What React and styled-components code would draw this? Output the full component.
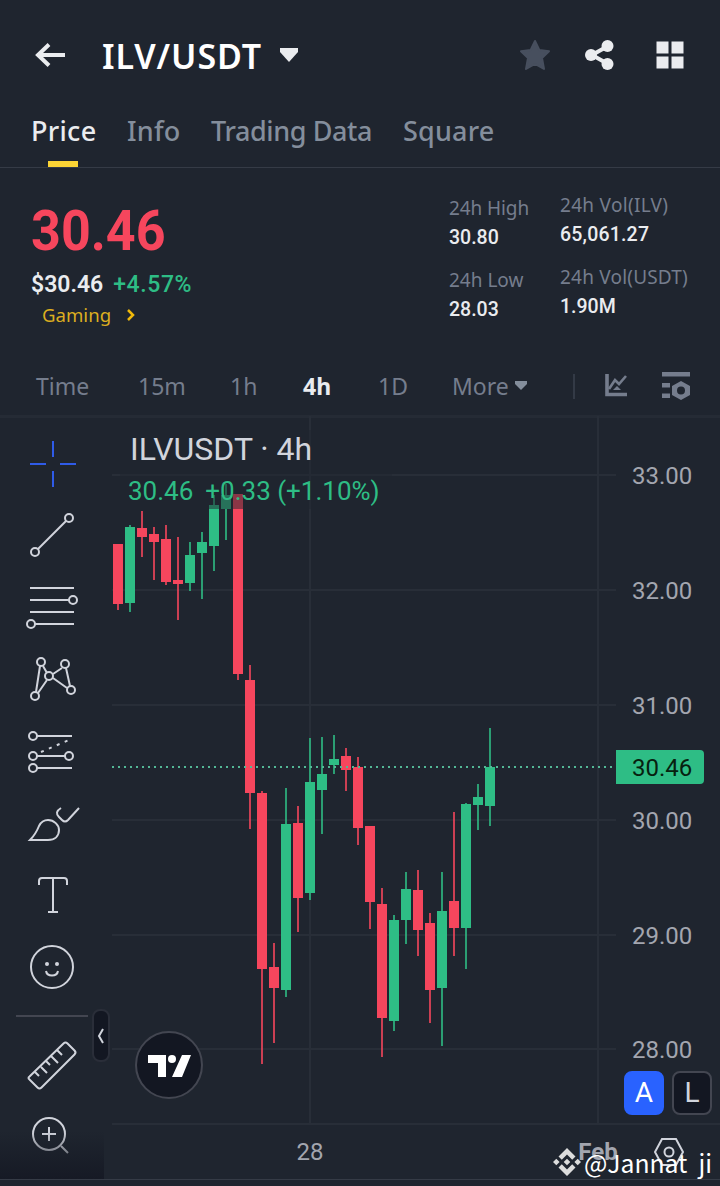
import React, { useState } from "react";
import styled, { createGlobalStyle } from "styled-components";

const GREEN = "#2ebd85";
const RED = "#f6465d";

const tabs = [
  { name: "Price", width: 96, spacing: 0.3 },
  { name: "Info", width: 84, spacing: 0.2 },
  { name: "Trading Data", width: 192, spacing: -0.4 },
  { name: "Square", width: 110, spacing: 0.2 },
];

const intervals = [
  { name: "Time", width: 102 },
  { name: "15m", width: 92 },
  { name: "1h", width: 73 },
  { name: "4h", width: 75 },
  { name: "1D", width: 74 },
];

const prices = ["33.00", "32.00", "31.00", "30.00", "29.00", "28.00"];

// [direction, wick top, body top, body bottom, wick bottom]
const candles = [
  ["down", 544, 544, 604, 610],
  ["up", 525, 527, 603, 612],
  ["down", 511, 528, 537, 557],
  ["down", 527, 534, 542, 580],
  ["down", 525, 539, 582, 585],
  ["down", 537, 580, 584, 620],
  ["up", 542, 555, 583, 591],
  ["up", 532, 542, 553, 599],
  ["up", 495, 505, 546, 571],
  ["up", 484, 495, 509, 540],
  ["down", 494, 494, 674, 680],
  ["down", 665, 680, 793, 829],
  ["down", 791, 793, 969, 1064],
  ["down", 943, 967, 988, 1043],
  ["up", 788, 824, 990, 997],
  ["down", 806, 823, 898, 932],
  ["up", 738, 782, 893, 900],
  ["up", 737, 774, 790, 834],
  ["up", 735, 759, 765, 774],
  ["down", 748, 756, 770, 791],
  ["down", 757, 767, 828, 845],
  ["down", 826, 826, 902, 929],
  ["down", 888, 904, 1018, 1057],
  ["up", 915, 920, 1021, 1031],
  ["up", 872, 889, 920, 944],
  ["down", 870, 890, 930, 956],
  ["down", 913, 923, 990, 1023],
  ["up", 872, 911, 988, 1046],
  ["down", 812, 901, 928, 956],
  ["up", 803, 804, 928, 969],
  ["up", 784, 797, 805, 830],
  ["up", 728, 767, 806, 826],
];

const tools = {
  cross: (
    <path stroke="#2f5be8" d="M53 13v16M53 43v16M30 36h16M60 36h16" />
  ),
  trend: (
    <>
      <path d="M38 49l28-28" />
      <circle cx="35" cy="52" r="4" />
      <circle cx="69" cy="18" r="4" />
    </>
  ),
  fib: (
    <>
      <path d="M30 16h44M30 28h39M30 40h44M35 52h39" />
      <circle cx="73" cy="28" r="4" />
      <circle cx="31" cy="52" r="4" />
    </>
  ),
  pattern: (
    <>
      <path d="M36 48l4-26M38 49l9-13M43 22l4 7M53 30l9-6M66 24l4 18M53 34l14 10" />
      <circle cx="41" cy="18" r="4" />
      <circle cx="65" cy="20" r="4" />
      <circle cx="49" cy="32" r="4" />
      <circle cx="35" cy="52" r="4" />
      <circle cx="71" cy="46" r="4" />
    </>
  ),
  forecast: (
    <>
      <path d="M37 20h35M37 40h28M37 52h35" />
      <path strokeDasharray="3 5.6" d="M41 36l28-12" />
      <circle cx="33" cy="20" r="4" />
      <circle cx="33" cy="40" r="4" />
      <circle cx="33" cy="52" r="4" />
      <circle cx="69" cy="40" r="4" />
    </>
  ),
  brush: (
    <>
      <path d="M30 52c4-4 7-9 9-14 2-4 5-6 9-6 6 0 11 5 11 10 0 6-4 10-11 10z" />
      <path d="M61 20c-5 3-5 6-2 9l3 3c2 2 4 2 6 0l11-12" />
    </>
  ),
  text: <path d="M39 25v-4q0-3 3-3h22q3 0 3 3v4M53 18v34M48 52h10" />,
  smile: (
    <>
      <circle cx="52" cy="35" r="21" />
      <circle cx="47" cy="32" r="2" fill="#d1d4dc" stroke="none" />
      <circle cx="57" cy="32" r="2" fill="#d1d4dc" stroke="none" />
      <path d="M46 39c1 6 11 6 12 0" />
    </>
  ),
};

const extraTools = {
  ruler: (
    <path d="M29.500 47.500l34-33q2-2 4 0l7 7q2 2 0 4l-33 33q-2 2-4 0l-8-8q-2-1.500 0-3zM35 43l4 4M41 38l6 6M46 32l4 4M51 27l7 7M57 21l5 5" />
  ),
  zoom: (
    <>
      <circle cx="49" cy="33" r="16" />
      <path d="M49 26v14M42 33h14M61 45l7 7" />
    </>
  ),
};

function CandleChart() {
  return (
    <svg width="504" height="708" viewBox="112 416 504 708">
      <g fill="#282e38">
        {prices.map((price, i) => (
          <rect key={price} x="112" y={Math.round(474 + i * 114.88)} width="504" height="2" />
        ))}
        <rect x="309" y="416" width="2" height="708" />
        <rect x="597" y="416" width="2" height="708" />
      </g>
      {candles.map(([dir, high, top, bottom, low], i) => (
        <g key={i} fill={dir === "up" ? GREEN : RED}>
          <rect x={117 + i * 12} y={high} width="2" height={low - high} opacity="0.8" />
          <rect x={113 + i * 12} y={top} width="10" height={bottom - top} />
        </g>
      ))}
      <path
        d="M112 767h504"
        stroke="#53b896"
        strokeWidth="2"
        strokeDasharray="2 4"
      />
    </svg>
  );
}

function App() {
  const [tab, setTab] = useState("Price");
  const [interval, setInterval] = useState("4h");

  return (
    <Page>
      <GlobalStyle />
      <Header>
        <svg width="32" height="28" viewBox="0 0 32 28" fill="none" stroke="#eaecef" strokeWidth="4">
          <path d="M3 14h28M15 3.500L4 14l11 10.500" />
        </svg>
        <Pair>ILV/USDT</Pair>
        <svg width="20" height="16" viewBox="0 0 20 16" fill="#eaecef">
          <path d="M1 1h18v4l-9 10L1 5z" />
        </svg>
        <Actions>
          <svg width="32" height="32" viewBox="0 0 32 32" fill="#474f5e" stroke="#474f5e" strokeWidth="2" strokeLinejoin="round">
            <path d="M16 2l4.300 9 9.700 1.300-7 6.700 2 11-9-5-9 5 2-11-7-6.700L11.700 11z" />
          </svg>
          <svg width="30" height="32" viewBox="0 0 30 32" fill="#eaecef">
            <path d="M23 7L7 16l16 9" fill="none" stroke="#eaecef" strokeWidth="4" />
            <circle cx="22.500" cy="7" r="6" />
            <circle cx="6" cy="16" r="6" />
            <circle cx="22.500" cy="25" r="6" />
          </svg>
          <svg width="28" height="28" viewBox="0 0 28 28" fill="#eaecef">
            <path d="M.5.500h12v12H.5zM15.500.500h12v12h-12zM.5 15.500h12v12H.5zM15.500 15.500h12v12h-12z" />
          </svg>
        </Actions>
      </Header>

      <Tabs>
        {tabs.map(({ name, width, spacing }) => (
          <Tab
            key={name}
            $width={width}
            $spacing={spacing}
            $active={tab === name}
            onClick={() => setTab(name)}
          >
            {name}
          </Tab>
        ))}
      </Tabs>

      <Ticker>
        <PriceBlock>
          <LastPrice>30.46</LastPrice>
          <Change>
            $30.46<span>+4.57%</span>
          </Change>
          <Category>
            Gaming
            <svg width="8" height="12" viewBox="0 0 8 12" fill="none" stroke="#f0b90b" strokeWidth="2.500">
              <path d="M1 1l5 5-5 5" />
            </svg>
          </Category>
        </PriceBlock>
        <Stats $width={111} $top={25}>
          <Label $spacing={-0.1}>24h High</Label>
          <Value>30.80</Value>
          <Label>24h Low</Label>
          <Value>28.03</Value>
        </Stats>
        <Stats $width={160} $top={22}>
          <Label $spacing={0.3}>24h Vol(ILV)</Label>
          <Value $spacing={0.2}>65,061.27</Value>
          <Label $spacing={0.2}>24h Vol(USDT)</Label>
          <Value>1.90M</Value>
        </Stats>
      </Ticker>

      <Intervals>
        {intervals.map(({ name, width }) => (
          <Interval
            key={name}
            $width={width}
            $active={interval === name}
            onClick={() => setInterval(name)}
          >
            {name}
          </Interval>
        ))}
        <More>
          More
          <svg width="14" height="12" viewBox="0 0 14 12" fill="#848e9c">
            <path d="M1 1h12v3l-6 6-6-6z" />
          </svg>
        </More>
        <Separator />
        <svg width="24" height="26" viewBox="0 0 24 26" fill="none" stroke="#757d8d">
          <path d="M3 1v20.500h20" strokeWidth="3.600" />
          <path d="M5 16l6-9 4 4 7-8" strokeWidth="2.600" />
          <path d="M9 17l4-4 4 4z" fill="#757d8d" stroke="none" />
        </svg>
        <SettingsIcon width="30" height="30" viewBox="0 0 30 30" fill="#757d8d">
          <path d="M1 1h28v4.500H1zM1 12h8v4.500H1zM1 22.500h8V27H1z" />
          <path
            fillRule="evenodd"
            d="M20 10l9 5v9l-9 5-9-5v-9zM20 15.500a4 4 0 100 8 4 4 0 000-8z"
          />
        </SettingsIcon>
      </Intervals>

      <Body>
        <Toolbar>
          {Object.keys(tools).map((name) => (
            <Tool key={name} viewBox="0 0 104 72">
              {tools[name]}
            </Tool>
          ))}
          <ToolDivider />
          {Object.keys(extraTools).map((name) => (
            <Tool key={name} viewBox="0 0 104 72">
              {extraTools[name]}
            </Tool>
          ))}
          <Fade />
          <Handle>
            <svg width="8" height="16" viewBox="0 0 8 16" fill="none" stroke="#d1d4dc" strokeWidth="2">
              <path d="M6 1L2 8l4 7" />
            </svg>
          </Handle>
        </Toolbar>

        <ChartArea>
          <PlotRow>
            <Plot>
              <CandleChart />
              <Legend>
                <Symbol>ILVUSDT · 4h</Symbol>
                <Quote>
                  30.46<span>+0.33 (+1.10%)</span>
                </Quote>
              </Legend>
              <Logo width="68" height="68" viewBox="135 1031 68 68">
                <circle cx="169" cy="1065" r="33" fill="#131722" stroke="#434651" strokeWidth="2" />
                <g fill="#fff">
                  <path d="M148 1055h18v22h-8v-14h-10zM182 1055h9l-9 22h-10z" />
                  <circle cx="172" cy="1059" r="4" />
                </g>
              </Logo>
            </Plot>
            <PriceAxis>
              {prices.map((price) => (
                <AxisLabel key={price}>{price}</AxisLabel>
              ))}
              <ScaleButtons>
                <ScaleButton $active>A</ScaleButton>
                <ScaleButton>L</ScaleButton>
              </ScaleButtons>
              <PriceTag>30.46</PriceTag>
            </PriceAxis>
          </PlotRow>
          <TimeAxis>
            <TimeLabel $width={396}>28</TimeLabel>
            <TimeLabel $width={180} $bold>
              Feb
            </TimeLabel>
            <GearIcon width="30" height="28" viewBox="0 0 30 28" fill="none" stroke="#d1d4dc" strokeWidth="2">
              <path d="M8 1h14l7 13-7 13H8L1 14z" />
              <circle cx="15" cy="14" r="4.500" />
            </GearIcon>
          </TimeAxis>
        </ChartArea>
      </Body>

      <Watermark>
        <svg width="28" height="28" viewBox="0 0 28 28" fill="#dcdcdc">
          <path d="M14 0l8.500 8.500-3.300 3.300L14 6.600l-5.200 5.200-3.300-3.300zM14 28l8.500-8.500-3.300-3.300-5.200 5.200-5.200-5.200-3.300 3.300zM14 10.700l3.300 3.300-3.300 3.300-3.300-3.300zM3.300 10.700L6.600 14l-3.300 3.300L0 14zM24.700 10.700L28 14l-3.300 3.300-3.300-3.300z" />
        </svg>
        @Jannat {" "}ji
      </Watermark>
    </Page>
  );
}

export default App;

const GlobalStyle = createGlobalStyle`
  * {
    box-sizing: border-box;
  }
  body {
    margin: 0;
    background: #1f252f;
  }
  svg {
    display: block;
    flex-shrink: 0;
  }
`;

const Page = styled.div`
  position: relative;
  display: flex;
  flex-direction: column;
  width: 720px;
  height: 1186px;
  overflow: hidden;
  background: #1f252f;
  color: #eaecef;
  font-family: "Noto Sans", sans-serif;
`;

const Header = styled.div`
  display: flex;
  align-items: center;
  height: 110px;
  padding: 0 36px 0 34px;
`;

const Pair = styled.div`
  width: 177px;
  margin-left: 36px;
  padding-top: 2px;
  color: #fff;
  font-size: 34px;
  font-weight: 650;
  letter-spacing: 0.9px;
  line-height: 40px;
  white-space: nowrap;
`;

const Actions = styled.div`
  display: flex;
  align-items: center;
  margin-left: auto;

  svg:nth-child(2) {
    margin: 0 41px 0 34px;
  }
`;

const Tabs = styled.div`
  display: flex;
  height: 58px;
  padding-left: 32px;
  border-bottom: 1px solid #353b46;
`;

const Tab = styled.div`
  width: ${(props) => props.$width}px;
  color: ${(props) => (props.$active ? "#eaecef" : "#848e9c")};
  font-size: 27px;
  font-weight: 500;
  letter-spacing: ${(props) => props.$spacing || 0}px;
  line-height: 42px;
  text-indent: -1px;
  white-space: nowrap;
  cursor: pointer;

  &::after {
    content: "";
    display: ${(props) => (props.$active ? "block" : "none")};
    width: 30px;
    height: 6px;
    margin: 9px 0 0 16px;
    background: #fcd535;
  }
`;

const Ticker = styled.div`
  display: flex;
  height: 187px;
  padding-left: 31px;
`;

const PriceBlock = styled.div`
  flex: 1;
  padding-top: 32px;
`;

const LastPrice = styled.div`
  color: ${RED};
  font-family: Roboto, sans-serif;
  font-size: 56px;
  font-weight: 700;
  line-height: 62px;
  transform: scaleX(0.93);
  transform-origin: left;
`;

const Change = styled.div`
  display: flex;
  font-family: Roboto, sans-serif;
  font-size: 23px;
  font-weight: 600;
  line-height: 30px;
  margin-top: 8px;

  span {
    margin-left: 10px;
    color: ${GREEN};
    font-weight: 500;
    letter-spacing: 0.6px;
  }
`;

const Category = styled.div`
  display: flex;
  align-items: center;
  gap: 16px;
  padding-left: 11px;
  color: #dcae20;
  font-size: 18.6px;
  line-height: 30px;
`;

const Stats = styled.div`
  width: ${(props) => props.$width}px;
  padding-top: ${(props) => props.$top}px;
`;

const Label = styled.div`
  color: #757d8d;
  font-size: 19px;
  letter-spacing: ${(props) => props.$spacing || 0}px;
  line-height: 30px;
  white-space: nowrap;
`;

const Value = styled.div`
  margin-bottom: 13px;
  font-family: Roboto, sans-serif;
  font-size: 19.5px;
  font-weight: 500;
  letter-spacing: ${(props) => props.$spacing || 0}px;
  line-height: 29px;
`;

const Intervals = styled.div`
  display: flex;
  align-items: center;
  height: 61px;
  padding: 1px 0 0 36px;
`;

const Interval = styled.div`
  width: ${(props) => props.$width}px;
  color: ${(props) => (props.$active ? "#eaecef" : "#757d8d")};
  font-size: 23px;
  font-weight: ${(props) => (props.$active ? 700 : 400)};
  cursor: pointer;
`;

const More = styled.div`
  display: flex;
  align-items: center;
  gap: 5px;
  width: 121px;
  color: #757d8d;
  font-size: 23px;
`;

const Separator = styled.div`
  width: 2px;
  height: 25px;
  margin-right: 29px;
  background: #333a46;
`;

const SettingsIcon = styled.svg`
  margin-left: 33px;
`;

const Body = styled.div`
  display: flex;
  height: 764px;
  border-bottom: 1px solid #353b46;
  box-shadow: 0 -1px #252b35, inset 0 2px #252b35;
`;

const Toolbar = styled.div`
  position: relative;
  display: flex;
  flex-direction: column;
  width: 112px;
  padding-top: 12px;
`;

const Tool = styled.svg`
  width: 104px;
  height: 72px;
  fill: none;
  stroke: #d1d4dc;
  stroke-width: 2;
`;

const ToolDivider = styled.div`
  width: 72px;
  height: 2px;
  margin: 11px 0 12px 16px;
  flex-shrink: 0;
  background: #434651;
`;

const Fade = styled.div`
  position: absolute;
  left: 0;
  bottom: 0;
  width: 104px;
  height: 48px;
  background: linear-gradient(rgba(19, 23, 34, 0), #161a25);
`;

const Handle = styled.div`
  position: absolute;
  left: 92px;
  top: 593px;
  display: flex;
  align-items: center;
  justify-content: center;
  width: 18px;
  height: 53px;
  border: 2px solid #2a2e39;
  border-radius: 8px;
  background: #131722;
`;

const ChartArea = styled.div`
  display: flex;
  flex-direction: column;
  width: 608px;
`;

const PlotRow = styled.div`
  display: flex;
  height: 707px;
`;

const Plot = styled.div`
  position: relative;
  width: 504px;
`;

const Legend = styled.div`
  position: absolute;
  left: 8px;
  top: 14px;
  width: 272px;
  height: 79px;
  font-family: Roboto, sans-serif;
  background: rgba(31, 37, 47, 0.5);
  white-space: nowrap;
`;

const Symbol = styled.div`
  padding-left: 10px;
  color: #d1d4dc;
  font-size: 32px;
  height: 40px;
  line-height: 38px;
`;

const Quote = styled.div`
  padding-left: 8px;
  color: ${GREEN};
  font-size: 26px;
  line-height: 42px;

  span {
    margin-left: 12px;
  }
`;

const Logo = styled.svg`
  position: absolute;
  left: 23px;
  top: 615px;
`;

const PriceAxis = styled.div`
  position: relative;
  display: flex;
  flex-direction: column;
  gap: 84.9px;
  width: 104px;
  padding-top: 45px;
  color: #a3a6af;
  font-family: Roboto, sans-serif;
  font-size: 24px;
`;

const AxisLabel = styled.div`
  height: 30px;
  padding-left: 16px;
  line-height: 30px;
`;

const ScaleButtons = styled.div`
  display: flex;
  gap: 8px;
  margin: -79.4px 0 0 8px;
`;

const ScaleButton = styled.div`
  width: 40px;
  height: 44px;
  border: 2px solid ${(props) => (props.$active ? "#2962ff" : "#434651")};
  border-radius: 8px;
  background: ${(props) => (props.$active ? "#2962ff" : "#131722")};
  color: ${(props) => (props.$active ? "#fff" : "#d1d4dc")};
  font-size: 28px;
  line-height: 40px;
  text-align: center;
`;

const PriceTag = styled.div`
  position: absolute;
  left: 0;
  top: 334px;
  width: 88px;
  height: 34px;
  padding-left: 16px;
  border-radius: 0 4px 4px 0;
  background: ${GREEN};
  color: #07210f;
  line-height: 36px;
`;

const TimeAxis = styled.div`
  position: relative;
  display: flex;
  height: 56px;
  border-top: 2px solid #282e38;
  font-family: Roboto, sans-serif;
`;

const TimeLabel = styled.div`
  width: ${(props) => props.$width}px;
  color: #a3a6af;
  font-size: 24px;
  font-weight: ${(props) => (props.$bold ? 700 : 400)};
  line-height: 54px;
  text-align: center;
`;

const GearIcon = styled.svg`
  position: absolute;
  left: 542px;
  top: 13px;
`;

const Watermark = styled.div`
  position: absolute;
  right: 8px;
  bottom: 9px;
  display: flex;
  align-items: center;
  gap: 3px;
  color: #fff;
  font-family: "Noto Sans CJK SC", sans-serif;
  font-size: 24.7px;
  font-weight: 400;
  line-height: 30px;
  white-space: pre;
`;
